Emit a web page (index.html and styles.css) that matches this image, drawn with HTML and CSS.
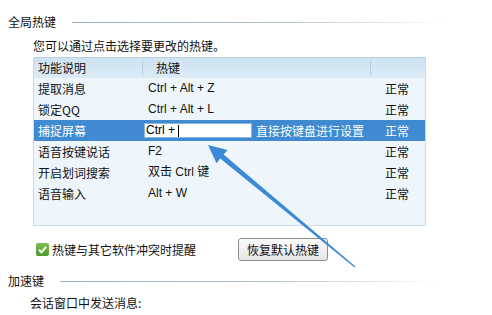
FILE: index.html
```html
<!DOCTYPE html>
<html lang="zh">
<head>
<meta charset="utf-8">
<link rel="stylesheet" href="styles.css">
</head>
<body>
<div class="page">
  <div class="group-title"><span>全局热键</span><span class="rule rule-1"></span></div>
  <div class="desc">您可以通过点击选择要更改的热键。</div>
  <div class="table">
    <div class="row head">
      <div class="c1">功能说明</div>
      <div class="c2">热键</div>
      <div class="c3"></div>
    </div>
    <div class="row"><div class="c1">提取消息</div><div class="c2 lat">Ctrl + Alt + Z</div><div class="c3">正常</div></div>
    <div class="row"><div class="c1">锁定QQ</div><div class="c2 lat">Ctrl + Alt + L</div><div class="c3">正常</div></div>
    <div class="row sel"><div class="c1">捕捉屏幕</div><div class="c2 editcell"><span class="edit lat">Ctrl +<span class="caret"></span></span><span class="hint">直接按键盘进行设置</span></div><div class="c3">正常</div></div>
    <div class="row"><div class="c1">语音按键说话</div><div class="c2 lat">F2</div><div class="c3">正常</div></div>
    <div class="row"><div class="c1">开启划词搜索</div><div class="c2 lat">双击 Ctrl 键</div><div class="c3">正常</div></div>
    <div class="row"><div class="c1">语音输入</div><div class="c2 lat">Alt + W</div><div class="c3">正常</div></div>
  </div>
  <div class="opts">
    <label class="chk"><span class="box"><svg width="13" height="13" viewBox="0 0 13 13"><path d="M3 6.8 L5.4 9.2 L10.2 3.8" fill="none" stroke="#fff" stroke-width="2"/></svg></span>热键与其它软件冲突时提醒</label>
    <button class="btn">恢复默认热键</button>
  </div>
  <div class="group-title g2"><span>加速键</span><span class="rule rule-2"></span></div>
  <div class="sub">会话窗口中发送消息:</div>
</div>
<svg class="arrow" width="492" height="315" viewBox="0 0 492 315">
  <polygon points="208,145 227.5,150 223.6,154.4 355.4,266.6 354.6,267.4 220.2,158.6 216.5,163.2" fill="#3c8ad6"/>
</svg>
</body>
</html>
```
FILE: styles.css
```css
html, body {
  margin: 0;
  padding: 0;
  background: #fff;
}
body {
  font-family: "Noto Sans CJK SC", "Liberation Sans", sans-serif;
  font-size: 12px;
  color: #111;
  position: relative;
  width: 492px;
  height: 315px;
  overflow: hidden;
}
.page {
  padding-top: 15px;
}
.group-title {
  display: flex;
  align-items: center;
  height: 14px;
  line-height: 14px;
  padding-left: 8px;
}
.rule {
  display: block;
  height: 1px;
  margin-left: 16px;
  background: linear-gradient(to right, #9fb0bd, #b8c6cf 60%, rgba(220,230,235,0));
}
.rule-1 { width: 374px; }
.rule-2 { width: 380px; }
.desc {
  margin: 10px 0 0 33px;
  line-height: 14px;
  height: 14px;
}
.table {
  margin: 4px 0 0 33px;
  width: 391px;
  height: 167px;
  border: 1px solid #c9dceb;
  border-top-color: #b9d0e2;
  background: #eef6fb;
}
.row {
  display: flex;
  height: 21px;
  line-height: 21px;
  align-items: center;
}
.row.head {
  height: 20px;
  line-height: 20px;
  background: linear-gradient(#cfe2f1, #dcebf6);
}
.c1 {
  width: 108px;
  padding-left: 4px;
  box-sizing: border-box;
}
.c2 {
  width: 228px;
  padding-left: 6px;
  box-sizing: border-box;
  white-space: nowrap;
}
.c3 {
  width: 55px;
  padding-left: 15px;
  box-sizing: border-box;
}
.head .c2 {
  padding-left: 13px;
  border-left: 1px solid #b7cbdb;
  height: 14px;
  line-height: 14px;
}
.head .c3 {
  border-left: 1px solid #b7cbdb;
  height: 14px;
}
.lat {
  font-family: "Liberation Sans", "Noto Sans CJK SC", sans-serif;
  font-size: 12px;
}
.row.sel {
  background: #3f8ad0;
  color: #fff;
}
.editcell {
  display: flex;
  align-items: center;
  padding-left: 2px;
}
.edit {
  display: flex;
  align-items: center;
  width: 108px;
  height: 15px;
  line-height: 15px;
  box-sizing: border-box;
  background: #fff;
  border: 1px solid #8fb3d6;
  color: #000;
  padding-left: 1px;
}
.caret {
  display: inline-block;
  width: 1px;
  height: 12px;
  background: #000;
  margin-left: 3px;
}
.hint {
  margin-left: 4px;
}
.opts {
  display: flex;
  align-items: center;
  height: 23px;
  margin-top: 12px;
}
.chk {
  display: flex;
  align-items: center;
  margin-left: 36px;
  width: 202px;
}
.box {
  display: block;
  width: 13px;
  height: 13px;
  border-radius: 2px;
  background: linear-gradient(#7cbf52, #4f9a2c);
  margin-right: 3px;
}
.box svg { display: block; }
.btn {
  width: 90px;
  height: 23px;
  padding: 0;
  border: 1px solid #8d8d8d;
  border-radius: 3px;
  background: linear-gradient(#fbfbfb, #e6e6e6);
  font-family: "Noto Sans CJK SC", sans-serif;
  font-size: 12px;
  color: #111;
}
.g2 {
  margin-top: 13px;
}
.sub {
  margin: 8px 0 0 30px;
  line-height: 14px;
}
.arrow {
  position: absolute;
  left: 0;
  top: 0;
  pointer-events: none;
}
```
